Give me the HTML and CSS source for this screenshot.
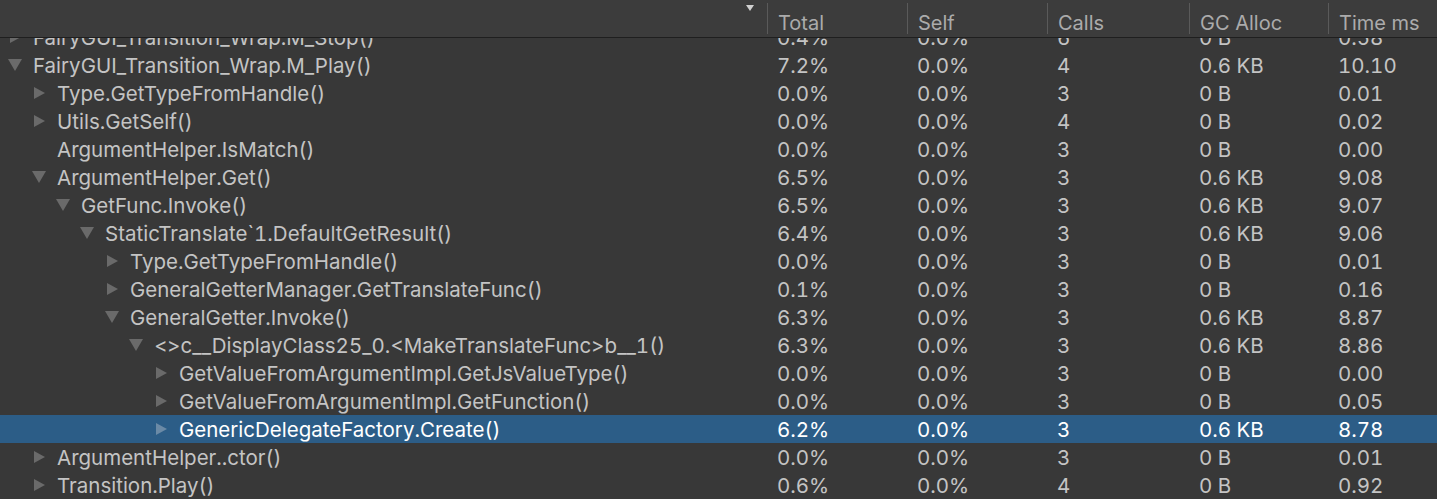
FILE: index.html
```html
<!DOCTYPE html>
<html>
<head>
<meta charset="utf-8">
<link rel="stylesheet" href="styles.css">
</head>
<body>
<div class="profiler">
  <div class="header">
    <div class="hcell hname"><span class="sort"><svg width="8" height="6" viewBox="0 0 8 6"><polygon points="0,0 8,0 4,6" fill="#d0d0d0"/></svg></span></div>
    <div class="hcell sep">Total</div>
    <div class="hcell sep">Self</div>
    <div class="hcell sep">Calls</div>
    <div class="hcell sep">GC Alloc</div>
    <div class="hcell sep">Time ms</div>
  </div>
  <div class="viewport">
    <div class="rows">
      <div class="row"><div class="name l0"><span class="arr col"></span><span>FairyGUI_Transition_Wrap.M_Stop()</span></div><div class="cell">0.4%</div><div class="cell">0.0%</div><div class="cell">6</div><div class="cell">0 B</div><div class="cell">0.58</div></div>
      <div class="row"><div class="name l0"><span class="arr exp"></span><span>FairyGUI_Transition_Wrap.M_Play()</span></div><div class="cell">7.2%</div><div class="cell">0.0%</div><div class="cell">4</div><div class="cell">0.6 KB</div><div class="cell">10.10</div></div>
      <div class="row"><div class="name l1"><span class="arr col"></span><span>Type.GetTypeFromHandle()</span></div><div class="cell">0.0%</div><div class="cell">0.0%</div><div class="cell">3</div><div class="cell">0 B</div><div class="cell">0.01</div></div>
      <div class="row"><div class="name l1"><span class="arr col"></span><span>Utils.GetSelf()</span></div><div class="cell">0.0%</div><div class="cell">0.0%</div><div class="cell">4</div><div class="cell">0 B</div><div class="cell">0.02</div></div>
      <div class="row"><div class="name l1"><span class="arr"></span><span>ArgumentHelper.IsMatch()</span></div><div class="cell">0.0%</div><div class="cell">0.0%</div><div class="cell">3</div><div class="cell">0 B</div><div class="cell">0.00</div></div>
      <div class="row"><div class="name l1"><span class="arr exp"></span><span>ArgumentHelper.Get()</span></div><div class="cell">6.5%</div><div class="cell">0.0%</div><div class="cell">3</div><div class="cell">0.6 KB</div><div class="cell">9.08</div></div>
      <div class="row"><div class="name l2"><span class="arr exp"></span><span>GetFunc.Invoke()</span></div><div class="cell">6.5%</div><div class="cell">0.0%</div><div class="cell">3</div><div class="cell">0.6 KB</div><div class="cell">9.07</div></div>
      <div class="row"><div class="name l3"><span class="arr exp"></span><span>StaticTranslate`1.DefaultGetResult()</span></div><div class="cell">6.4%</div><div class="cell">0.0%</div><div class="cell">3</div><div class="cell">0.6 KB</div><div class="cell">9.06</div></div>
      <div class="row"><div class="name l4"><span class="arr col"></span><span>Type.GetTypeFromHandle()</span></div><div class="cell">0.0%</div><div class="cell">0.0%</div><div class="cell">3</div><div class="cell">0 B</div><div class="cell">0.01</div></div>
      <div class="row"><div class="name l4"><span class="arr col"></span><span>GeneralGetterManager.GetTranslateFunc()</span></div><div class="cell">0.1%</div><div class="cell">0.0%</div><div class="cell">3</div><div class="cell">0 B</div><div class="cell">0.16</div></div>
      <div class="row"><div class="name l4"><span class="arr exp"></span><span>GeneralGetter.Invoke()</span></div><div class="cell">6.3%</div><div class="cell">0.0%</div><div class="cell">3</div><div class="cell">0.6 KB</div><div class="cell">8.87</div></div>
      <div class="row"><div class="name l5"><span class="arr exp"></span><span>&lt;&gt;c__DisplayClass25_0.&lt;MakeTranslateFunc&gt;b__1()</span></div><div class="cell">6.3%</div><div class="cell">0.0%</div><div class="cell">3</div><div class="cell">0.6 KB</div><div class="cell">8.86</div></div>
      <div class="row"><div class="name l6"><span class="arr col"></span><span>GetValueFromArgumentImpl.GetJsValueType()</span></div><div class="cell">0.0%</div><div class="cell">0.0%</div><div class="cell">3</div><div class="cell">0 B</div><div class="cell">0.00</div></div>
      <div class="row"><div class="name l6"><span class="arr col"></span><span>GetValueFromArgumentImpl.GetFunction()</span></div><div class="cell">0.0%</div><div class="cell">0.0%</div><div class="cell">3</div><div class="cell">0 B</div><div class="cell">0.05</div></div>
      <div class="row selected"><div class="name l6"><span class="arr col"></span><span>GenericDelegateFactory.Create()</span></div><div class="cell">6.2%</div><div class="cell">0.0%</div><div class="cell">3</div><div class="cell">0.6 KB</div><div class="cell">8.78</div></div>
      <div class="row"><div class="name l1"><span class="arr col"></span><span>ArgumentHelper..ctor()</span></div><div class="cell">0.0%</div><div class="cell">0.0%</div><div class="cell">3</div><div class="cell">0 B</div><div class="cell">0.01</div></div>
      <div class="row"><div class="name l1"><span class="arr col"></span><span>Transition.Play()</span></div><div class="cell">0.6%</div><div class="cell">0.0%</div><div class="cell">4</div><div class="cell">0 B</div><div class="cell">0.92</div></div>
    </div>
  </div>
</div>
</body>
</html>
```
FILE: styles.css
```css
html, body {
  margin: 0;
  padding: 0;
  background: #383838;
}
body {
  font-family: Inter, "Noto Sans", "Liberation Sans", sans-serif;
  color: #c4c4c4;
  overflow: hidden;
}
.profiler {
  width: 1437px;
  height: 499px;
  display: flex;
  flex-direction: column;
  overflow: hidden;
}
.header {
  position: relative;
  z-index: 2;
  height: 37px;
  flex: none;
  display: grid;
  grid-template-columns: 767px 140px 140px 142px 139px 1fr;
  background: #3c3c3c;
  border-bottom: 1px solid #1f1f1f;
}
.hcell {
  font-size: 20px;
  color: #ababab;
  padding-left: 10px;
  white-space: nowrap;
}
.sep {
  border-left: 1px solid #5a5a5a;
  margin-top: 3px;
  height: 31px;
  padding-top: 8px;
  box-sizing: border-box;
  line-height: 24px;
}
.hname {
  padding: 5px 13px 0 0;
  display: flex;
  justify-content: flex-end;
  align-items: flex-start;
}
.sort svg { display: block; }
.viewport {
  flex: 1;
  overflow: hidden;
}
.rows {
  margin-top: -15px;
}
.row {
  height: 28px;
  display: grid;
  grid-template-columns: 767px 140px 140px 142px 139px 1fr;
  align-items: center;
  font-size: 20.5px;
  font-variant-numeric: tabular-nums;
  white-space: nowrap;
}
.row.selected {
  background: #2c5d87;
  color: #ffffff;
}
.name {
  display: flex;
  align-items: center;
}
.cell {
  padding-left: 10px;
}
.arr {
  width: 14px;
  height: 12px;
  margin-right: 11px;
  flex: none;
  position: relative;
}
.arr.exp::before {
  content: "";
  position: absolute;
  left: 0;
  top: 0;
  border-left: 7px solid transparent;
  border-right: 7px solid transparent;
  border-top: 12px solid #6a6a6a;
}
.arr.col::before {
  content: "";
  position: absolute;
  left: 2px;
  top: 0;
  border-top: 6px solid transparent;
  border-bottom: 6px solid transparent;
  border-left: 11px solid #6a6a6a;
}
.selected .arr.col::before {
  border-left-color: #6b8aa6;
}
.l0 { padding-left: 8px; }
.l1 { padding-left: 32px; }
.l2 { padding-left: 56px; }
.l3 { padding-left: 80px; }
.l4 { padding-left: 105px; }
.l5 { padding-left: 129px; }
.l6 { padding-left: 154px; }
```
